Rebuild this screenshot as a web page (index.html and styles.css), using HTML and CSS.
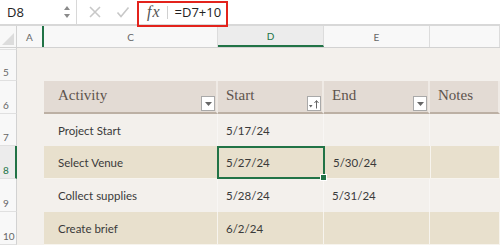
FILE: index.html
```html
<!DOCTYPE html>
<html lang="en">
<head>
  <meta charset="UTF-8">
  <title>Event Plan</title>
  <link rel="stylesheet" href="styles.css">
</head>
<body>
  <div class="formula-bar">
    <div class="name-box">
      <span>D8</span>
      <svg class="stepper" width="8" height="16" viewBox="0 0 8 16">
        <path d="M1 6 L4 2 L7 6 Z" fill="#8a8a8a"/>
        <path d="M1 10 L4 14 L7 10 Z" fill="#8a8a8a"/>
      </svg>
    </div>
    <div class="actions">
      <svg width="14" height="14" viewBox="0 0 14 14">
        <path d="M2 2 L12 12 M12 2 L2 12" stroke="#c8c8c8" stroke-width="1.6" fill="none"/>
      </svg>
      <svg width="14" height="14" viewBox="0 0 14 14">
        <path d="M1.5 7.5 L5 11.5 L12.5 2.5" stroke="#c8c8c8" stroke-width="1.6" fill="none"/>
      </svg>
    </div>
    <div class="formula">
      <span class="fx">fx</span>
      <span class="divider"></span>
      <span class="expr">=D7+10</span>
    </div>
    <div class="highlight"></div>
  </div>

  <div class="sheet">
    <div class="colheads">
      <div class="cell c-rh corner"></div>
      <div class="cell c-a">A</div>
      <div class="cell c-c">C</div>
      <div class="cell c-d active">D</div>
      <div class="cell c-e">E</div>
      <div class="cell c-f"></div>
    </div>

    <div class="row r4">
      <div class="cell c-rh"></div>
    </div>

    <div class="row r5">
      <div class="cell c-rh">5</div>
    </div>

    <div class="row r6 head">
      <div class="cell c-rh">6</div>
      <div class="cell c-a"></div>
      <div class="cell c-c">Activity
        <span class="filter"><svg width="9" height="6" viewBox="0 0 9 6"><path d="M1 1 L8 1 L4.5 5 Z" fill="#666"/></svg></span>
      </div>
      <div class="cell c-d">Start
        <span class="filter"><svg width="12" height="10" viewBox="0 0 12 10"><path d="M1 6 L4.5 6 L2.75 8.5 Z" fill="#666"/><path d="M8.5 9.5 L8.5 2 M6.5 4 L8.5 1.5 L10.5 4" stroke="#666" stroke-width="1" fill="none"/></svg></span>
      </div>
      <div class="cell c-e">End
        <span class="filter"><svg width="9" height="6" viewBox="0 0 9 6"><path d="M1 1 L8 1 L4.5 5 Z" fill="#666"/></svg></span>
      </div>
      <div class="cell c-f">Notes</div>
    </div>

    <div class="row r7 plain">
      <div class="cell c-rh">7</div>
      <div class="cell c-a"></div>
      <div class="cell c-c">Project Start</div>
      <div class="cell c-d">5/17/24</div>
      <div class="cell c-e"></div>
      <div class="cell c-f"></div>
    </div>

    <div class="row r8 band">
      <div class="cell c-rh active">8</div>
      <div class="cell c-a"></div>
      <div class="cell c-c">Select Venue</div>
      <div class="cell c-d selected">5/27/24<span class="handle"></span></div>
      <div class="cell c-e">5/30/24</div>
      <div class="cell c-f"></div>
    </div>

    <div class="row r9 plain">
      <div class="cell c-rh">9</div>
      <div class="cell c-a"></div>
      <div class="cell c-c">Collect supplies</div>
      <div class="cell c-d">5/28/24</div>
      <div class="cell c-e">5/31/24</div>
      <div class="cell c-f"></div>
    </div>

    <div class="row r10 band">
      <div class="cell c-rh">10</div>
      <div class="cell c-a"></div>
      <div class="cell c-c">Create brief</div>
      <div class="cell c-d">6/2/24</div>
      <div class="cell c-e"></div>
      <div class="cell c-f"></div>
    </div>
  </div>
</body>
</html>
```

FILE: styles.css
```css
body {
  margin: 0;
  background-color: #f3f0ec;
  font-family: Lato, 'Open Sans', sans-serif;
  color: #333;
  overflow: hidden;
}

/* formula bar */

.formula-bar {
  position: relative;
  display: flex;
  align-items: center;
  height: 24px;
  background-color: #fff;
  border-bottom: 2px solid #d8d8d8;
}

.name-box {
  width: 77px;
  height: 100%;
  box-sizing: border-box;
  display: flex;
  align-items: center;
  justify-content: space-between;
  padding: 0 5px 0 7px;
  border-right: 1px solid #d8d8d8;
  font-family: 'Open Sans', sans-serif;
  font-size: 13px;
  color: #222;
}

.actions {
  display: flex;
  align-items: center;
  gap: 14px;
  padding-left: 11px;
}

.formula {
  display: flex;
  align-items: center;
  margin-left: 17px;
}

.fx {
  font-family: 'Liberation Serif', serif;
  font-style: italic;
  font-size: 16px;
  color: #555;
  letter-spacing: 1px;
}

.divider {
  width: 1px;
  height: 13px;
  background-color: #d0d0d0;
  margin: 0 7px 0 6px;
}

.expr {
  font-family: 'Open Sans', sans-serif;
  font-size: 13px;
  color: #222;
}

.highlight {
  position: absolute;
  left: 137px;
  top: 1px;
  width: 87px;
  height: 22px;
  border: 2px solid #e3231c;
}

/* grid */

.colheads,
.row {
  display: flex;
}

.cell {
  box-sizing: border-box;
  flex: none;
}

.c-rh { width: 17px; }
.c-a { width: 27px; }
.c-c { width: 174px; }
.c-d { width: 106px; }
.c-e { width: 106px; }
.c-f { flex: 1; }

.colheads {
  height: 21px;
  background-color: #f8f8f8;
  border-bottom: 1px solid #d2d2d2;
  font-size: 10px;
  color: #666;
}

.colheads .cell {
  display: flex;
  align-items: center;
  justify-content: center;
  border-right: 1px solid #dcdcdc;
}

.colheads .c-a {
  border-right: 2px solid #217346;
}

.colheads .corner {
  position: relative;
  border-right: 1px solid #d2d2d2;
}

.colheads .corner::after {
  content: "";
  position: absolute;
  right: 2px;
  bottom: 2px;
  border-left: 12px solid transparent;
  border-bottom: 12px solid #dcdcdc;
}

.colheads .active {
  background-color: #ececec;
  color: #217346;
  border-bottom: 2px solid #217346;
}

.row .c-rh {
  display: flex;
  align-items: flex-end;
  padding: 0 0 2px 3px;
  background-color: #f8f8f8;
  border-right: 1px solid #d2d2d2;
  border-bottom: 1px solid #e0e0e0;
  font-size: 10px;
  color: #666;
}

.row .c-rh.active {
  background-color: #ececec;
  color: #217346;
  border-right: 2px solid #217346;
}

.r4 { height: 2px; }
.r4 .c-rh { padding: 0; }
.r5 { height: 31px; }
.r6 { height: 33px; }
.r7 { height: 32px; }
.r8 { height: 33px; }
.r9 { height: 33px; }
.r10 { height: 33px; }

/* table */

.head .c-c,
.head .c-d,
.head .c-e,
.head .c-f {
  position: relative;
  display: flex;
  align-items: center;
  padding: 0 0 2px 8px;
  background-color: #e3dbd4;
  border-right: 2px solid #efeae5;
  border-bottom: 2px solid #bcb0a4;
  font-family: 'Liberation Serif', serif;
  font-size: 15px;
  color: #5e544d;
}

.filter {
  position: absolute;
  right: 1px;
  bottom: 1px;
  width: 14px;
  height: 15px;
  box-sizing: border-box;
  display: flex;
  align-items: center;
  justify-content: center;
  background-color: #fff;
  border: 1px solid #a9a9a9;
}

.plain .c-c,
.plain .c-d,
.plain .c-e,
.plain .c-f,
.band .c-c,
.band .c-d,
.band .c-e,
.band .c-f {
  display: flex;
  align-items: center;
  padding-left: 8px;
  font-size: 11.5px;
  color: #3a3a3a;
}

.row .c-c {
  padding-left: 14px;
}

.plain .c-c,
.plain .c-d,
.plain .c-e {
  border-right: 1px solid #f8f6f4;
}

.band .c-c,
.band .c-d,
.band .c-e,
.band .c-f {
  background-color: #e8e0cd;
  border-right: 1px solid #f7f4ee;
  border-bottom: 1px solid #f7f4ee;
}

.band .selected {
  position: relative;
  padding-left: 7px;
  margin-left: -1px;
  width: 108px;
  border: 2px solid #217346;
}

.handle {
  position: absolute;
  right: -4px;
  bottom: -4px;
  width: 5px;
  height: 5px;
  background-color: #217346;
  border: 1px solid #fff;
}
```
